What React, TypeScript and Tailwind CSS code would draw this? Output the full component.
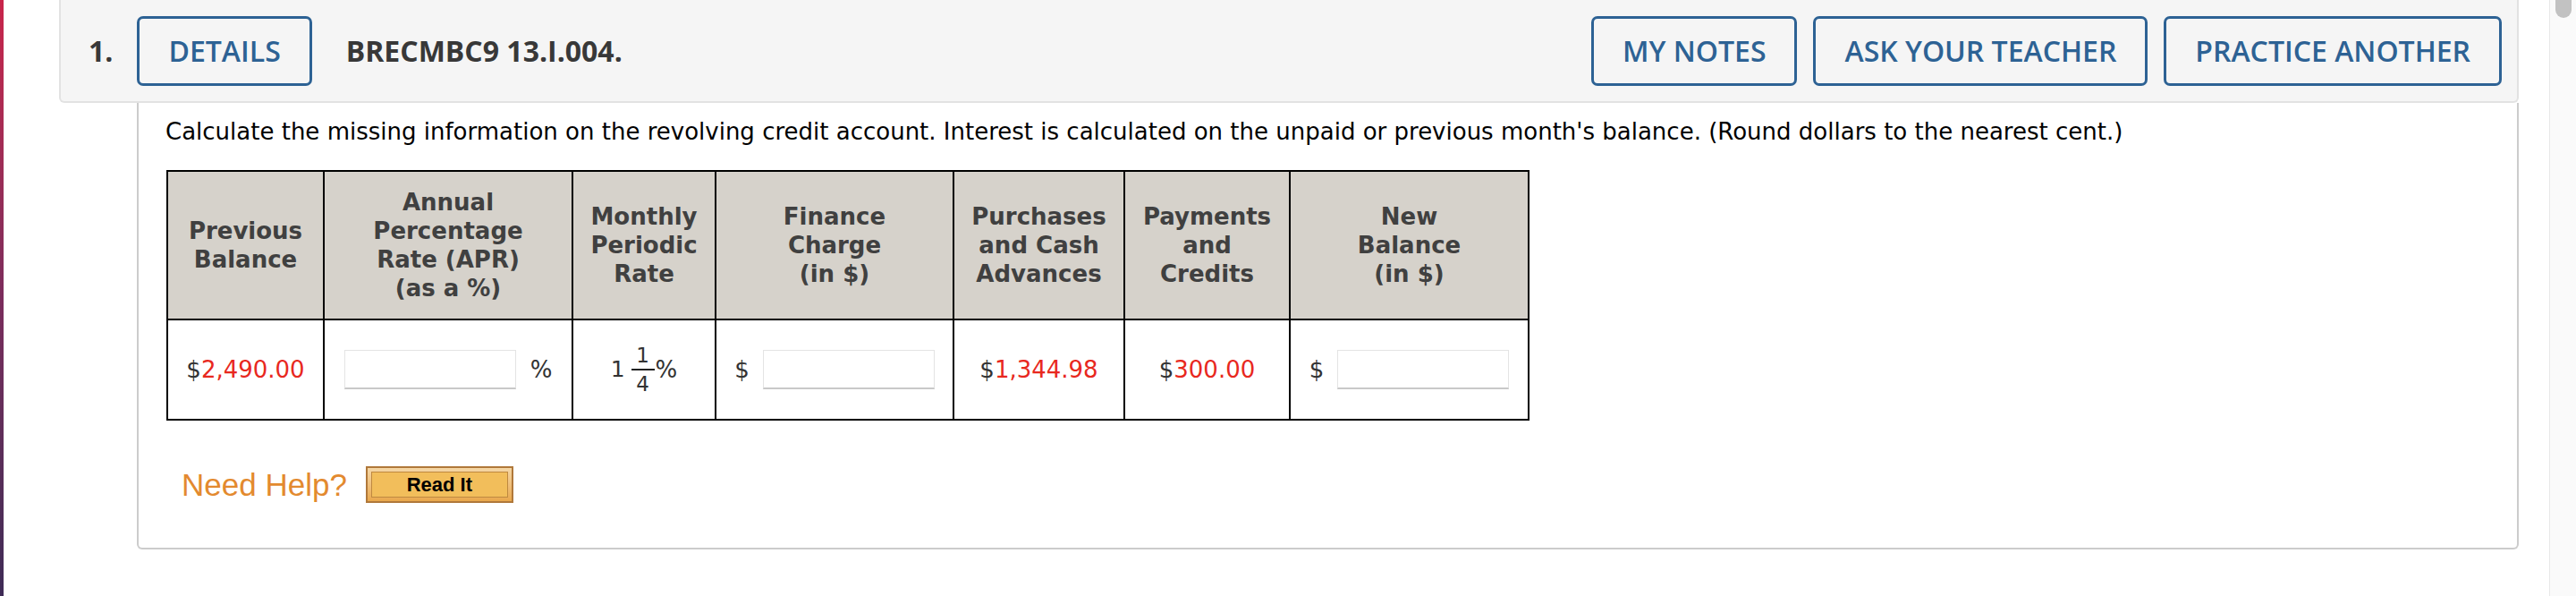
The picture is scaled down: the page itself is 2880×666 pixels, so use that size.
import React from 'react';

const headerCells: { lines: string[]; w: string }[] = [
  { lines: ['Previous', 'Balance'], w: 'w-[175px]' },
  { lines: ['Annual', 'Percentage', 'Rate (APR)', '(as a %)'], w: 'w-[278px]' },
  { lines: ['Monthly', 'Periodic', 'Rate'], w: 'w-[160px]' },
  { lines: ['Finance', 'Charge', '(in $)'], w: 'w-[266px]' },
  { lines: ['Purchases', 'and Cash', 'Advances'], w: 'w-[191px]' },
  { lines: ['Payments', 'and', 'Credits'], w: 'w-[185px]' },
  { lines: ['New', 'Balance', '(in $)'], w: 'w-[267px]' },
];

function HeaderButton({ children }: { children: React.ReactNode }) {
  return (
    <button className="h-[78px] px-[32px] rounded-[7px] border-[3px] border-[#2d6294] text-[#2d6294] text-[32px] font-semibold leading-none bg-transparent whitespace-nowrap">
      {children}
    </button>
  );
}

function Money({ value }: { value: string }) {
  return (
    <span>
      <span className="text-[#333]">$</span>
      <span className="text-[#e8281e]">{value}</span>
    </span>
  );
}

function Blank() {
  return <div className="w-[192px] h-[44px] bg-white border border-[#e4e4e4] border-b-2 border-b-[#c9c9c9]" />;
}

export default function App() {
  return (
    <div className="h-[666px] flex bg-white overflow-hidden">
      <div className="w-[4px] shrink-0 bg-gradient-to-b from-[#c9244a] via-[#7b2c5c] to-[#3e2b56]" />

      <main className="flex-1 flex flex-col">
        <header
          className="ml-[62px] mr-[34px] h-[115px] flex items-center pl-[31px] pr-[17px] bg-[#f5f5f5] border-2 border-t-0 border-[#e2e2e2] rounded-b-[6px] text-[#383838] text-[32px] font-bold"
          style={{ fontFamily: '"Open Sans", sans-serif' }}
        >
          <span>1.</span>
          <div className="ml-[27px]">
            <HeaderButton>DETAILS</HeaderButton>
          </div>
          <span className="ml-[38px]">BRECMBC9 13.I.004.</span>
          <div className="ml-auto flex gap-[18px]">
            <HeaderButton>MY NOTES</HeaderButton>
            <HeaderButton>ASK YOUR TEACHER</HeaderButton>
            <HeaderButton>PRACTICE ANOTHER</HeaderButton>
          </div>
        </header>

        <section className="ml-[149px] mr-[34px] border-2 border-t-0 border-[#cccccc] rounded-b-[6px] pt-[16px] pl-[30px] pb-[50px]">
          <p className="text-[26px] leading-[32px] text-black whitespace-nowrap" style={{ fontFamily: '"DejaVu Sans", Verdana, sans-serif' }}>
            Calculate the missing information on the revolving credit account. Interest is calculated on the unpaid or previous month's balance. (Round dollars to the nearest cent.)
          </p>

          <table
            className="mt-[27px] ml-[1px] table-fixed border-collapse w-[1522px] text-[26px]"
            style={{ fontFamily: '"DejaVu Sans", Verdana, sans-serif' }}
          >
            <colgroup>
              {headerCells.map(h => (
                <col key={h.lines.join(' ')} className={h.w} />
              ))}
            </colgroup>
            <thead>
              <tr>
                {headerCells.map(h => (
                  <th key={h.lines.join(' ')} className="h-[166px] border-2 border-black bg-[#d6d2cb] text-[#404040] font-bold leading-[32px] text-center align-middle">
                    {h.lines.map(l => (
                      <div key={l}>{l}</div>
                    ))}
                  </th>
                ))}
              </tr>
            </thead>
            <tbody>
              <tr className="h-[112px]">
                <td className="border-2 border-black text-center">
                  <Money value="2,490.00" />
                </td>
                <td className="border-2 border-black">
                  <div className="flex items-center justify-center gap-[16px] text-[#333]">
                    <Blank />
                    <span>%</span>
                  </div>
                </td>
                <td className="border-2 border-black">
                  <div className="flex items-center justify-center text-[#333]">
                    <span className="text-[25px] mr-[7px]">1</span>
                    <span className="flex flex-col items-center text-[23px] leading-[24px]">
                      <span>1</span>
                      <span className="w-[26px] h-[2px] bg-[#222] my-[3px]" />
                      <span>4</span>
                    </span>
                    <span className="text-[26px] ml-[1px]">%</span>
                  </div>
                </td>
                <td className="border-2 border-black">
                  <div className="flex items-center justify-center gap-[15px] text-[#333]">
                    <span>$</span>
                    <Blank />
                  </div>
                </td>
                <td className="border-2 border-black text-center">
                  <Money value="1,344.98" />
                </td>
                <td className="border-2 border-black text-center">
                  <Money value="300.00" />
                </td>
                <td className="border-2 border-black">
                  <div className="flex items-center justify-center gap-[15px] text-[#333]">
                    <span>$</span>
                    <Blank />
                  </div>
                </td>
              </tr>
            </tbody>
          </table>

          <div className="mt-[51px] ml-[18px] flex items-center" style={{ fontFamily: '"Liberation Sans", Arial, sans-serif' }}>
            <span className="text-[35px] leading-[41px] text-[#e38a2f]">Need Help?</span>
            <button className="ml-[21px] w-[165px] h-[41px] p-[4px] border-2 border-[#b0783a] bg-gradient-to-b from-[#f5d7a6] to-[#e9a84c]">
              <div className="h-full border border-[#bf8940] bg-[#f2be5b] flex items-center justify-center text-[22px] font-bold text-black leading-none">
                Read It
              </div>
            </button>
          </div>
        </section>
      </main>

      <div className="w-[30px] shrink-0 bg-[#fafafa] border-l border-[#e8e8e8] flex justify-center">
        <div className="w-[18px] h-[20px] rounded-b-full bg-[#c2c2c2]" />
      </div>
    </div>
  );
}
